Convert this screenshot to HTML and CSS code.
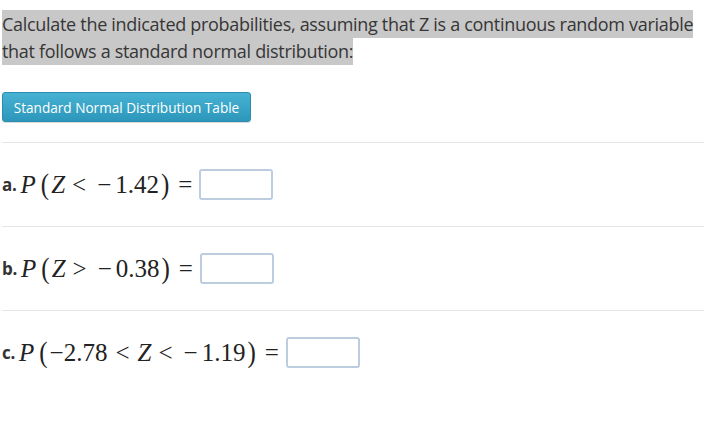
FILE: index.html
```html
<!DOCTYPE html>
<html>
<head>
<meta charset="utf-8">
<link rel="stylesheet" href="styles.css">
</head>
<body>
<div class="page">
  <p class="intro"><span class="sel">Calculate the indicated probabilities, assuming that Z is a continuous random variable that follows a standard normal distribution:</span></p>
  <div class="btn-row"><button class="btn">Standard Normal Distribution Table</button></div>
  <div class="q">
    <span class="lbl">a.</span>
    <span class="math"><i class="v">P</i><span class="p">(</span><i class="v">Z</i><span class="rel">&lt;</span><span class="neg">−</span>1.42<span class="p pr">)</span><span class="rel eq">=</span></span>
    <span class="box"></span>
  </div>
  <div class="q">
    <span class="lbl">b.</span>
    <span class="math"><i class="v">P</i><span class="p">(</span><i class="v">Z</i><span class="rel">&gt;</span><span class="neg">−</span>0.38<span class="p pr">)</span><span class="rel eq">=</span></span>
    <span class="box"></span>
  </div>
  <div class="q">
    <span class="lbl">c.</span>
    <span class="math"><i class="v">P</i><span class="p">(</span>−2.78<span class="rel wide">&lt;</span><i class="v">Z</i><span class="rel">&lt;</span><span class="neg">−</span>1.19<span class="p pr">)</span><span class="rel eq">=</span></span>
    <span class="box"></span>
  </div>
</div>
</body>
</html>
```
FILE: styles.css
```css
html, body {
  margin: 0;
  padding: 0;
  background: #fff;
}
.page {
  padding: 0 2px;
  font-family: "Open Sans", sans-serif;
  color: #333;
}
.intro {
  margin: 11px 0 0;
  font-size: 18px;
  letter-spacing: -0.3px;
  line-height: 27px;
  color: #363636;
}
.sel {
  background: #c8c8c8;
  padding: 2px 0;
}
.btn-row {
  margin-top: 27px;
  padding-bottom: 20px;
  border-bottom: 1px solid #e6e6e6;
}
.btn {
  display: inline-block;
  width: 249px;
  height: 30px;
  padding: 0;
  border: 1px solid #2a8cb0;
  border-radius: 3px;
  background: linear-gradient(#47b2d2, #2c97bb);
  color: #fff;
  font-family: "Open Sans", sans-serif;
  font-size: 13.6px;
  box-shadow: 0 1px 1px rgba(0,0,0,0.15);
}
.q {
  display: flex;
  align-items: center;
  height: 83px;
  border-bottom: 1px solid #e6e6e6;
}
.q:last-child {
  border-bottom: none;
}
.lbl {
  font-family: "Open Sans", sans-serif;
  font-weight: bold;
  font-size: 17px;
  letter-spacing: -0.3px;
  color: #333;
  margin-right: 4px;
}
.math {
  font-family: "Liberation Serif", serif;
  font-size: 25px;
  color: #222;
  white-space: nowrap;
}
.v {
  font-style: italic;
}
.p {
  display: inline-block;
  transform: scaleY(1.15);
  margin: 0 2px 0 5px;
}
.pr {
  margin: 0 0 0 2px;
}
.rel {
  margin: 0 0 0 7px;
}
.wide {
  margin: 0 8px 0 8px;
}
.eq {
  margin: 0 7px 0 9px;
}
.neg {
  margin: 0 4px 0 11px;
}
.box {
  display: inline-block;
  width: 70px;
  height: 27px;
  border: 2px solid #bccde0;
  border-radius: 3px;
  background: #fff;
}
```
